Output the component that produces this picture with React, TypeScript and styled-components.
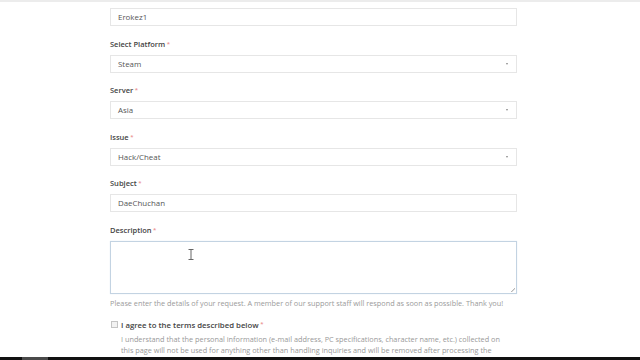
import { FC } from 'react'
import styled, { createGlobalStyle } from 'styled-components'

const FIELDS = [
  { label: 'Select Platform', value: 'Steam', select: true },
  { label: 'Server', value: 'Asia', select: true },
  { label: 'Issue', value: 'Hack/Cheat', select: true },
  { label: 'Subject', value: 'DaeChuchan', select: false },
]

const App: FC = () => {
  return (
    <Frame>
      <GlobalStyle />
      <TopLine />
      <Form>
        <Control>Erokez1</Control>

        {FIELDS.map((f) => (
          <Field key={f.label}>
            <Label>
              {f.label}
              <Req>*</Req>
            </Label>
            <Control>
              {f.value}
              {f.select && <Caret />}
            </Control>
          </Field>
        ))}

        <Field>
          <Label>
            Description
            <Req>*</Req>
          </Label>
          <TextArea>
            <Grip />
            <IBeam width="6" height="11" viewBox="0 0 6 11">
              <path d="M0.5 0.5h5M3 0.5v10M0.5 10.5h5" stroke="#666" strokeWidth="1" fill="none" />
            </IBeam>
          </TextArea>
        </Field>
        <Help>
          Please enter the details of your request. A member of our support staff will respond as soon as possible.
          Thank you!
        </Help>

        <Agree>
          <Check />
          <span>
            I agree to the terms described below
            <Req>*</Req>
          </span>
        </Agree>
        <Terms>
          I understand that the personal information (e-mail address, PC specifications, character name, etc.) collected on
          this page will not be used for anything other than handling inquiries and will be removed after processing the
          inquiry.
        </Terms>
      </Form>
      <PlayerBar>
        <Thumb />
      </PlayerBar>
    </Frame>
  )
}

export default App

// Styles

const GlobalStyle = createGlobalStyle`
  html, body {
    margin: 0;
    padding: 0;
    background: #fff;
  }
  body {
    font-family: "Open Sans", "Liberation Sans", sans-serif;
  }
`

const Frame = styled.div`
  position: relative;
  width: 640px;
  height: 360px;
  overflow: hidden;
  background: #fff;
`

const TopLine = styled.div`
  height: 2px;
  background: #ececec;
`

const Form = styled.div`
  margin-left: 110px;
  width: 407px;
  padding-top: 6px;
  display: flex;
  flex-direction: column;
`

const Field = styled.div`
  display: flex;
  flex-direction: column;
  margin-top: 12.5px;
`

const Label = styled.div`
  height: 10px;
  line-height: 10px;
  font-size: 7.5px;
  font-weight: 600;
  color: #444;
  margin-bottom: 6px;
`

const Req = styled.span`
  color: #ea8a8a;
  font-size: 6px;
  margin-left: 1.5px;
  vertical-align: top;
`

const Control = styled.div`
  position: relative;
  box-sizing: border-box;
  height: 18px;
  border: 1px solid #e6e6e6;
  padding: 0 7px;
  display: flex;
  align-items: center;
  font-size: 7.9px;
  color: #555;
`

const Caret = styled.span`
  position: absolute;
  right: 8px;
  top: 7px;
  width: 0;
  height: 0;
  border-left: 1.5px solid transparent;
  border-right: 1.5px solid transparent;
  border-top: 2.5px solid #888;
`

const TextArea = styled.div`
  position: relative;
  box-sizing: border-box;
  height: 53px;
  border: 1px solid #c3d3e2;
  box-shadow: 0 0 1px #dbe7f2;
`

const Grip = styled.span`
  position: absolute;
  right: 1px;
  bottom: 1px;
  width: 4px;
  height: 4px;
  background: linear-gradient(135deg, transparent 50%, #b8b8b8 50%, transparent 75%);
`

const IBeam = styled.svg`
  position: absolute;
  left: 77px;
  top: 7px;
`

const Help = styled.div`
  margin-top: 5px;
  font-size: 7.3px;
  line-height: 9px;
  color: #9a9a9a;
  white-space: nowrap;
`

const Agree = styled.div`
  margin-top: 12px;
  display: flex;
  align-items: center;
  height: 10px;
  font-size: 7.8px;
  font-weight: 600;
  color: #444;
`

const Check = styled.span`
  box-sizing: border-box;
  width: 7px;
  height: 7px;
  margin-left: 1px;
  margin-right: 3px;
  border: 1px solid #c4c4c4;
  background: #f2f2f2;
`

const Terms = styled.div`
  margin-top: 4px;
  padding-left: 11px;
  padding-right: 10px;
  font-size: 7.3px;
  line-height: 11px;
  color: #999;
`

const PlayerBar = styled.div`
  position: absolute;
  left: 0;
  right: 0;
  bottom: 0;
  height: 3px;
  background: #111;
`

const Thumb = styled.div`
  margin-left: 22px;
  width: 26px;
  height: 3px;
  background: #4a4a4a;
`
